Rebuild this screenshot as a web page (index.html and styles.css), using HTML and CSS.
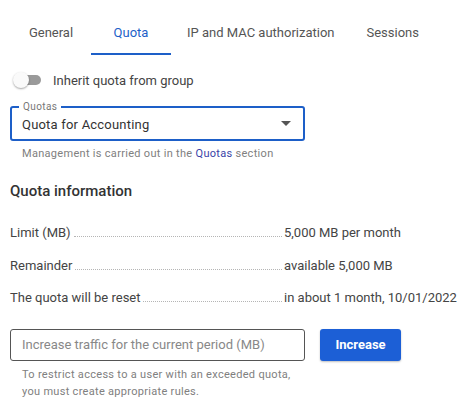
FILE: index.html
```html
<!DOCTYPE html>
<html>
<head>
<meta charset="utf-8">
<link rel="stylesheet" href="styles.css">
</head>
<body>
<div class="page">
  <nav class="tabs">
    <div class="tab">General</div>
    <div class="tab active">Quota</div>
    <div class="tab">IP and MAC authorization</div>
    <div class="tab">Sessions</div>
  </nav>

  <div class="toggle-row">
    <span class="switch"><span class="track"></span><span class="thumb"></span></span>
    <span class="toggle-label">Inherit quota from group</span>
  </div>

  <div class="select">
    <span class="select-legend">Quotas</span>
    <span class="select-value">Quota for Accounting</span>
    <svg class="select-arrow" width="10" height="5" viewBox="0 0 10 5"><path d="M0 0 L10 0 L5 5 Z" fill="#555"/></svg>
  </div>
  <div class="helper">Management is carried out in the <a class="link">Quotas</a> section</div>

  <h2 class="section-title">Quota information</h2>

  <div class="info">
    <div class="info-row"><span class="info-label">Limit (MB)</span><span class="dots"></span><span class="info-value">5,000 MB per month</span></div>
    <div class="info-row"><span class="info-label">Remainder</span><span class="dots"></span><span class="info-value">available 5,000 MB</span></div>
    <div class="info-row"><span class="info-label">The quota will be reset</span><span class="dots"></span><span class="info-value">in about 1 month, 10/01/2022</span></div>
  </div>

  <div class="increase-row">
    <div class="input">Increase traffic for the current period (MB)</div>
    <button class="btn">Increase</button>
  </div>
  <div class="helper helper-bottom">To restrict access to a user with an exceeded quota,<br>you must create appropriate rules.</div>
</div>
</body>
</html>
```

FILE: styles.css
```css
* { box-sizing: border-box; }
html, body { margin: 0; background: #fff; }
body {
  font-family: Roboto, "Noto Sans", Arial, sans-serif;
  color: #333;
  width: 474px;
  height: 411px;
  overflow: hidden;
}
.page { padding: 0 0 0 10px; }

.tabs {
  display: flex;
  height: 55px;
  padding-left: 1px;
}
.tab {
  min-width: 80px;
  padding: 26px 16px 0;
  text-align: center;
  font-size: 13px;
  color: #555;
  line-height: 14px;
  border-bottom: 2px solid transparent;
}
.tab.active {
  color: #1d5fc8;
  border-bottom-color: #1d5fc8;
}

.toggle-row {
  display: flex;
  align-items: center;
  height: 22px;
  margin-top: 14px;
}
.switch {
  position: relative;
  width: 28px;
  height: 16px;
  margin-left: 3px;
}
.track {
  position: absolute;
  left: 8px;
  top: 3px;
  width: 20px;
  height: 10px;
  border-radius: 5px;
  background: #9a9a9a;
}
.thumb {
  position: absolute;
  left: 0;
  top: 0;
  width: 16px;
  height: 16px;
  border-radius: 50%;
  background: #fafafa;
  box-shadow: 0 1px 2px rgba(0,0,0,0.35);
}
.toggle-label {
  margin-left: 12px;
  font-size: 13px;
  color: #444;
}

.select {
  position: relative;
  margin-top: 15px;
  width: 295px;
  height: 35px;
  border: 2px solid #1d5fc8;
  border-radius: 3px;
  display: flex;
  align-items: center;
  padding: 0 12px 0 10px;
}
.select-legend {
  position: absolute;
  left: 7px;
  top: -7px;
  background: #fff;
  padding: 0 4px;
  font-size: 10px;
  letter-spacing: 0.4px;
  line-height: 11px;
  color: #777;
}
.select-value {
  flex: 1;
  font-size: 13px;
  letter-spacing: 0.2px;
  color: #333;
  padding-top: 1px;
}

.helper {
  font-size: 11px;
  letter-spacing: 0.3px;
  color: #808080;
  padding-left: 12px;
  margin-top: 6px;
  line-height: 14px;
}
.link { color: #3a3fa8; }

.section-title {
  margin: 21px 0 0 0;
  font-size: 15px;
  font-weight: 500;
  color: #333;
  line-height: 18px;
}

.info { margin-top: 25px; width: 464px; }
.info-row {
  display: flex;
  align-items: baseline;
  height: 32.5px;
  font-size: 13px;
  color: #444;
}
.info-label { white-space: nowrap; }
.dots {
  flex: 1;
  border-bottom: 1px dotted #b5b5b5;
  margin: 0 2px 0 3px;
}
.info-value { width: 190px; white-space: nowrap; }

.increase-row {
  display: flex;
  align-items: center;
  margin-top: 6px;
}
.input {
  width: 295px;
  height: 32px;
  border: 1px solid #555;
  border-radius: 3px;
  padding: 0 11px;
  display: flex;
  align-items: center;
  font-size: 13px;
  color: #888;
}
.btn {
  margin-left: 15px;
  width: 81px;
  height: 32px;
  border: none;
  border-radius: 3px;
  background: #1c5fd6;
  color: #fff;
  font-family: inherit;
  font-size: 13px;
  font-weight: 700;
  box-shadow: 0 1px 2px rgba(0,0,0,0.25);
}
.helper-bottom {
  margin-top: 5px;
  line-height: 17px;
}
```
